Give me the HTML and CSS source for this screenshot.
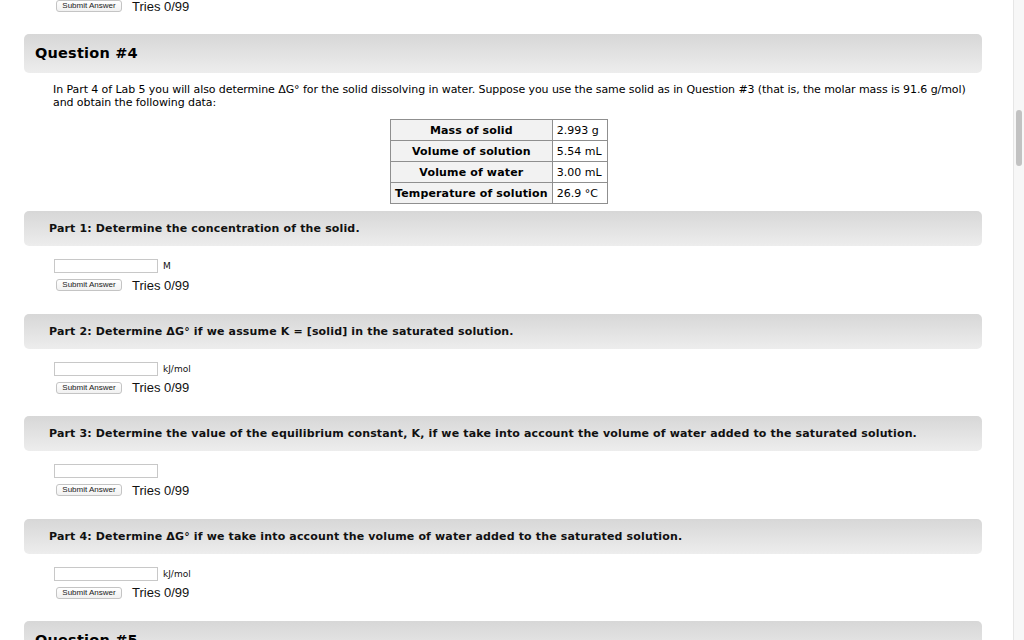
FILE: index.html
```html
<!DOCTYPE html>
<html lang="en">
<head>
    <meta charset="UTF-8">
    <title>Question #4</title>
    <link rel="stylesheet" href="styles.css">
</head>
<body>
    <div class="page">
        <div class="content">
            <div class="answer-row top-row">
                <button class="submit">Submit Answer</button>
                <span class="tries">Tries 0/99</span>
            </div>

            <div class="question-head">Question #4</div>
            <div class="question-body">
                <p class="intro">In Part 4 of Lab 5 you will also determine &Delta;G&deg; for the solid dissolving in water. Suppose you use the same solid as in Question #3 (that is, the molar mass is 91.6 g/mol) and obtain the following data:</p>
                <table class="data">
                    <tr><th>Mass of solid</th><td>2.993 g</td></tr>
                    <tr><th>Volume of solution</th><td>5.54 mL</td></tr>
                    <tr><th>Volume of water</th><td>3.00 mL</td></tr>
                    <tr><th>Temperature of solution</th><td>26.9 &deg;C</td></tr>
                </table>
            </div>

            <div class="part">
                <div class="part-head">Part 1: Determine the concentration of the solid.</div>
                <div class="input-row"><input type="text"><span class="unit">M</span></div>
                <div class="answer-row">
                    <button class="submit">Submit Answer</button>
                    <span class="tries">Tries 0/99</span>
                </div>
            </div>

            <div class="part">
                <div class="part-head">Part 2: Determine &Delta;G&deg; if we assume K = [solid] in the saturated solution.</div>
                <div class="input-row"><input type="text"><span class="unit">kJ/mol</span></div>
                <div class="answer-row">
                    <button class="submit">Submit Answer</button>
                    <span class="tries">Tries 0/99</span>
                </div>
            </div>

            <div class="part">
                <div class="part-head">Part 3: Determine the value of the equilibrium constant, K, if we take into account the volume of water added to the saturated solution.</div>
                <div class="input-row"><input type="text"></div>
                <div class="answer-row">
                    <button class="submit">Submit Answer</button>
                    <span class="tries">Tries 0/99</span>
                </div>
            </div>

            <div class="part">
                <div class="part-head">Part 4: Determine &Delta;G&deg; if we take into account the volume of water added to the saturated solution.</div>
                <div class="input-row"><input type="text"><span class="unit">kJ/mol</span></div>
                <div class="answer-row">
                    <button class="submit">Submit Answer</button>
                    <span class="tries">Tries 0/99</span>
                </div>
            </div>

            <div class="question-head">Question #5</div>
        </div>
        <div class="scrollbar"><div class="thumb"></div></div>
    </div>
</body>
</html>
```

FILE: styles.css
```css
body {
    margin: 0;
    font-family: "DejaVu Sans", Verdana, sans-serif;
    color: #000;
    background: #fff;
}
.page {
    display: flex;
    height: 640px;
    overflow: hidden;
}
.content {
    flex: 1;
    padding: 0 31px 0 24px;
}
.scrollbar {
    width: 10px;
    background: #f7f7f7;
    border-left: 1px solid #e6e6e6;
}
.thumb {
    width: 6px;
    height: 56px;
    margin: 110px 0 0 2px;
    border-radius: 3px;
    background: #c2c2c2;
}

/* answer rows */
.answer-row {
    display: flex;
    align-items: center;
    height: 12px;
    padding-left: 32px;
}
.top-row {
    margin-top: 0;
}
.submit {
    font-family: "Liberation Sans", Arial, sans-serif;
    font-size: 8px;
    height: 12px;
    width: 66px;
    padding: 0;
    line-height: 10px;
    color: #222;
    background: linear-gradient(#ffffff, #f1f1f1);
    border: 1px solid #c4c4c4;
    border-radius: 3px;
}
.tries {
    font-family: "Liberation Sans", Arial, sans-serif;
    font-size: 13px;
    margin-left: 10px;
    color: #111;
}

/* headers */
.question-head {
    margin-top: 22px;
    height: 39px;
    line-height: 39px;
    padding-left: 11px;
    font-size: 14.5px;
    letter-spacing: 0.2px;
    font-weight: bold;
    border-radius: 5px;
    background: linear-gradient(#d7d7d7, #ededed);
}
.part-head {
    height: 35px;
    line-height: 35px;
    padding-left: 25px;
    font-size: 11px;
    letter-spacing: 0.15px;
    font-weight: bold;
    color: #111;
    border-radius: 5px;
    background: linear-gradient(#d7d7d7, #ededed);
}

/* question text and data */
.question-body {
    padding: 0 10px 0 29px;
}
.intro {
    margin: 10px 0 0;
    font-size: 11px;
    letter-spacing: -0.08px;
    line-height: 13px;
}
.data {
    margin: 10px 0 0 337px;
    border-collapse: collapse;
    font-size: 11px;
}
.data th, .data td {
    height: 20px;
    padding: 0 4px;
    border: 1px solid #8f8f8f;
}
.data th {
    background: #f2f2f2;
    text-align: center;
    letter-spacing: 0.15px;
}
.data td {
    text-align: left;
    padding-right: 5px;
}

/* parts */
.part {
    margin-top: 7px;
    margin-bottom: 22.5px;
}
.part + .question-head {
    margin-top: 0;
}
.input-row {
    display: flex;
    align-items: center;
    height: 14px;
    margin: 13px 0 6px;
    padding-left: 30px;
}
.input-row input {
    width: 104px;
    height: 14px;
    box-sizing: border-box;
    padding: 0;
    border: 1px solid #c8c8c8;
    border-radius: 0;
}
.unit {
    margin-left: 5px;
    font-size: 9px;
    color: #111;
}
```
